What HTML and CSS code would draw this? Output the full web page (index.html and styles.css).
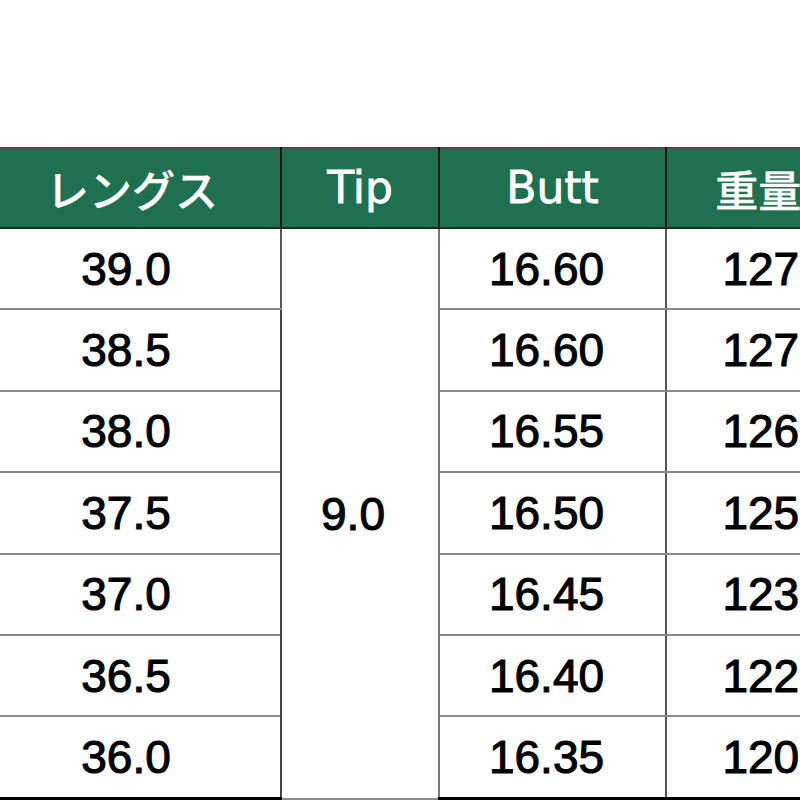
FILE: index.html
```html
<!DOCTYPE html>
<html lang="ja">
<head>
<meta charset="utf-8">
<title>Shaft spec</title>
<link rel="stylesheet" href="styles.css">
</head>
<body>
<table class="spec">
  <colgroup>
    <col class="c-len">
    <col class="c-tip">
    <col class="c-butt">
    <col class="c-wt">
  </colgroup>
  <thead>
    <tr>
      <th class="ja">レングス</th>
      <th>Tip</th>
      <th>Butt</th>
      <th class="ja last">重量(g)</th>
    </tr>
  </thead>
  <tbody>
    <tr><td>39.0</td><td class="tip" rowspan="7">9.0</td><td>16.60</td><td class="last">127.5</td></tr>
    <tr><td>38.5</td><td>16.60</td><td class="last">127.0</td></tr>
    <tr><td>38.0</td><td>16.55</td><td class="last">126.0</td></tr>
    <tr><td>37.5</td><td>16.50</td><td class="last">125.0</td></tr>
    <tr><td>37.0</td><td>16.45</td><td class="last">123.5</td></tr>
    <tr><td>36.5</td><td>16.40</td><td class="last">122.0</td></tr>
    <tr class="end"><td>36.0</td><td>16.35</td><td class="last">120.5</td></tr>
  </tbody>
</table>
</body>
</html>
```

FILE: styles.css
```css
html, body {
  margin: 0;
  padding: 0;
  background: #ffffff;
  overflow: hidden;
  width: 800px;
  height: 800px;
}

.spec {
  margin-top: 147px;
  margin-left: -18px;
  border-collapse: collapse;
  table-layout: fixed;
  width: 923px;
}

.c-len { width: 298px; }
.c-tip { width: 158px; }
.c-butt { width: 227px; }
.c-wt { width: 240px; }

.spec th {
  height: 78px;
  padding: 0;
  background: #1e7050;
  color: #ffffff;
  font-family: "DejaVu Sans", "Noto Sans CJK JP", sans-serif;
  font-size: 44px;
  font-weight: normal;
  text-align: center;
  vertical-align: middle;
  border-top: 2px solid #4a4a4a;
  border-bottom: 2px solid #1c2a22;
  border-left: 2px solid #151515;
  border-right: 2px solid #151515;
  line-height: 1;
  -webkit-text-stroke: 0.8px #ffffff;
}

.spec th.ja {
  font-family: "Noto Sans CJK JP", sans-serif;
  font-size: 43px;
  font-weight: 500;
  -webkit-text-stroke: 0.3px #ffffff;
}

.spec td {
  height: 79.4px;
  padding: 0 12px 0 0;
  color: #000000;
  font-family: "Liberation Sans", Arial, sans-serif;
  font-size: 46px;
  font-weight: normal;
  text-align: center;
  vertical-align: middle;
  border-top: 2px solid #8a8a8a;
  border-bottom: 2px solid #8a8a8a;
  border-left: 2px solid #555555;
  border-right: 2px solid #555555;
  line-height: 1;
  -webkit-text-stroke: 1.1px #000000;
}

.spec td.tip {
  padding-right: 14px;
  border-left-color: #444444;
  border-right-color: #777777;
}

.spec td.last {
  border-left: 2px solid #222222;
}

.spec tr.end td {
  border-bottom: 5px solid #000000;
}
```
